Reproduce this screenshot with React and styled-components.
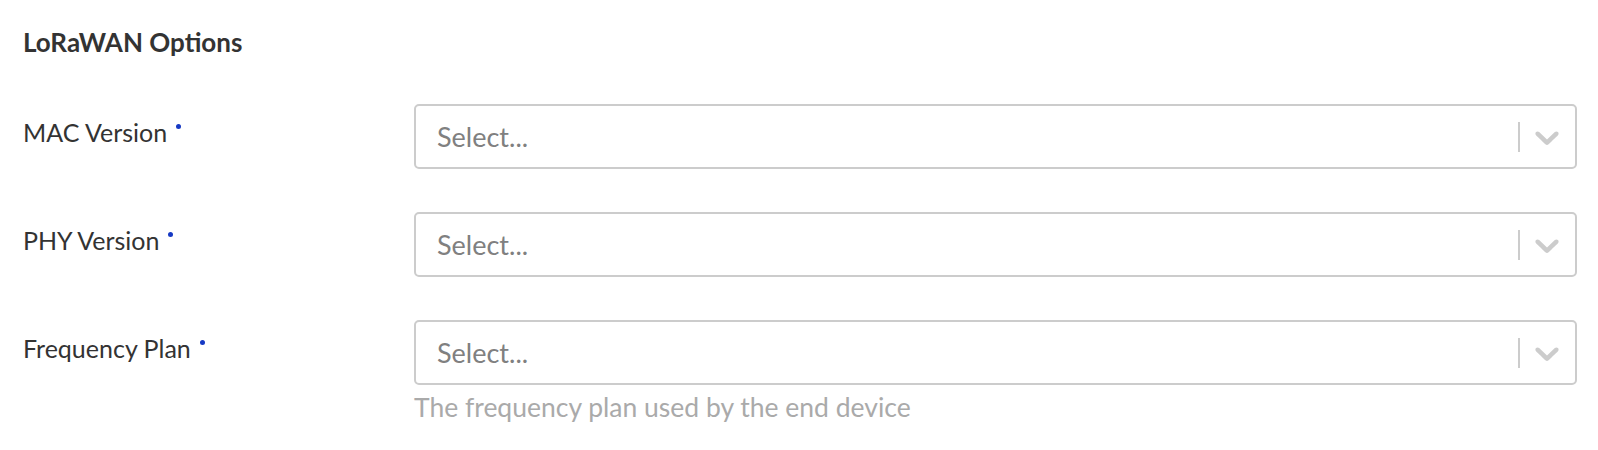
import React from "react";
import styled, { createGlobalStyle } from "styled-components";

const GlobalStyle = createGlobalStyle`
  body {
    margin: 0;
    background: #fff;
    font-family: Lato, "Liberation Sans", sans-serif;
  }
`;

const Form = styled.div`
  padding: 27px 21px 0 23px;
`;

const Heading = styled.h2`
  margin: 0 0 46px 0;
  font-size: 26px;
  line-height: 31px;
  font-weight: 700;
  color: #333;
`;

const Row = styled.div`
  display: grid;
  grid-template-columns: 391px 1fr;
  margin-bottom: 43px;
`;

const Label = styled.label`
  padding-top: 13px;
  font-size: 25px;
  line-height: 30px;
  color: #333;
`;

const Required = styled.span`
  display: inline-block;
  width: 5px;
  height: 5px;
  border-radius: 50%;
  background: #1639c4;
  margin-left: 9px;
  vertical-align: top;
  margin-top: 7px;
`;

const Control = styled.div`
  display: flex;
  flex-direction: column;
`;

const SelectBox = styled.div`
  display: flex;
  align-items: center;
  height: 65px;
  box-sizing: border-box;
  border: 2px solid #cccccc;
  border-radius: 5px;
  background: #fff;
`;

const Placeholder = styled.div`
  flex: 1;
  padding-left: 21px;
  font-size: 27px;
  color: #808080;
`;

const Separator = styled.span`
  width: 2px;
  height: 30px;
  background: #cccccc;
`;

const Indicator = styled.div`
  display: flex;
  align-items: center;
  padding: 0 8px 0 7px;
`;

const Hint = styled.div`
  margin-top: 7px;
  font-size: 26.5px;
  line-height: 31px;
  color: #aaaaaa;
`;

const Chevron = () => (
  <svg width="40" height="40" viewBox="0 0 20 20" fill="#cccccc">
    <path d="M4.516 7.548c0.436-0.446 1.043-0.481 1.576 0l3.908 3.747 3.908-3.747c0.533-0.481 1.141-0.446 1.574 0 0.436 0.445 0.408 1.197 0 1.615-0.406 0.418-4.695 4.502-4.695 4.502-0.217 0.223-0.502 0.335-0.787 0.335s-0.57-0.112-0.789-0.335c0 0-4.287-4.084-4.695-4.502s-0.436-1.17 0-1.615z" />
  </svg>
);

const fields = [
  { label: "MAC Version" },
  { label: "PHY Version" },
  { label: "Frequency Plan", hint: "The frequency plan used by the end device" },
];

export default function App() {
  return (
    <>
      <GlobalStyle />
      <Form>
        <Heading>LoRaWAN Options</Heading>
        {fields.map(f => (
          <Row key={f.label}>
            <Label>
              {f.label}
              <Required />
            </Label>
            <Control>
              <SelectBox>
                <Placeholder>Select...</Placeholder>
                <Separator />
                <Indicator>
                  <Chevron />
                </Indicator>
              </SelectBox>
              {f.hint && <Hint>{f.hint}</Hint>}
            </Control>
          </Row>
        ))}
      </Form>
    </>
  );
}
